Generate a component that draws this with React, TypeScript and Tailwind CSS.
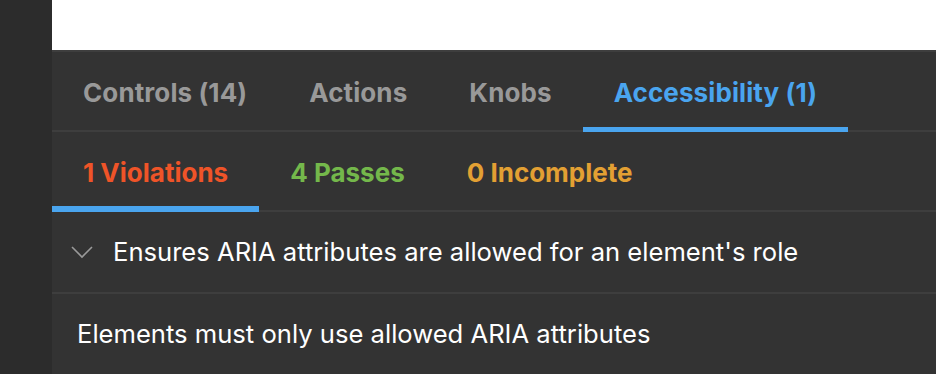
const tabs = [
  { label: "Controls (14)", active: false },
  { label: "Actions", active: false },
  { label: "Knobs", active: false },
  { label: "Accessibility (1)", active: true },
];

const results = [
  { label: "1 Violations", color: "text-[#ef5428]", active: true },
  { label: "4 Passes", color: "text-[#74b84b]", active: false },
  { label: "0 Incomplete", color: "text-[#e3a033]", active: false },
];

function Chevron() {
  return (
    <svg width="22" height="13" viewBox="0 0 22 13" fill="none" className="shrink-0">
      <polyline points="1,1 11,11 21,1" stroke="#9a9a9a" strokeWidth="1.6" />
    </svg>
  );
}

export default function App() {
  return (
    <div className="flex h-[374px] w-[936px] overflow-hidden bg-[#2c2c2c] font-['Inter',sans-serif]">
      <div className="w-[52px] shrink-0 bg-[#2c2c2c]" />
      <div className="flex min-w-0 flex-1 flex-col bg-[#333333]">
        <div className="h-[50px] bg-white" />

        {/* addon tabs */}
        <div className="flex h-[82px] border-y-2 border-[#3e3e3e]">
          {tabs.map((t) => (
            <button
              key={t.label}
              type="button"
              className={`-mb-[2px] flex items-center whitespace-nowrap border-b-[5px] px-[31px] pt-[5px] text-[26px] font-bold tracking-[0.1px] ${
                t.active
                  ? "border-[#4aa5ef] text-[#4aa5ef]"
                  : "border-transparent text-[#999999]"
              }`}
            >
              {t.label}
            </button>
          ))}
        </div>

        {/* a11y result tabs */}
        <div className="flex h-[80px] border-b-2 border-[#3e3e3e]">
          {results.map((r) => (
            <button
              key={r.label}
              type="button"
              className={`-mb-[2px] flex items-center whitespace-nowrap border-b-[6px] px-[31px] pt-[6px] text-[26px] font-bold tracking-[0px] ${r.color} ${
                r.active ? "border-[#4aa5ef]" : "border-transparent"
              }`}
            >
              {r.label}
            </button>
          ))}
        </div>

        <div className="flex h-[82px] items-center gap-[20px] border-b-2 border-[#3e3e3e] pl-[19px] text-[25.6px] text-white">
          <Chevron />
          <span className="whitespace-nowrap">Ensures ARIA attributes are allowed for an element's role</span>
        </div>

        <div className="flex h-[80px] items-center whitespace-nowrap pl-[25px] text-[25.6px] text-white">
          Elements must only use allowed ARIA attributes
        </div>
      </div>
    </div>
  );
}
